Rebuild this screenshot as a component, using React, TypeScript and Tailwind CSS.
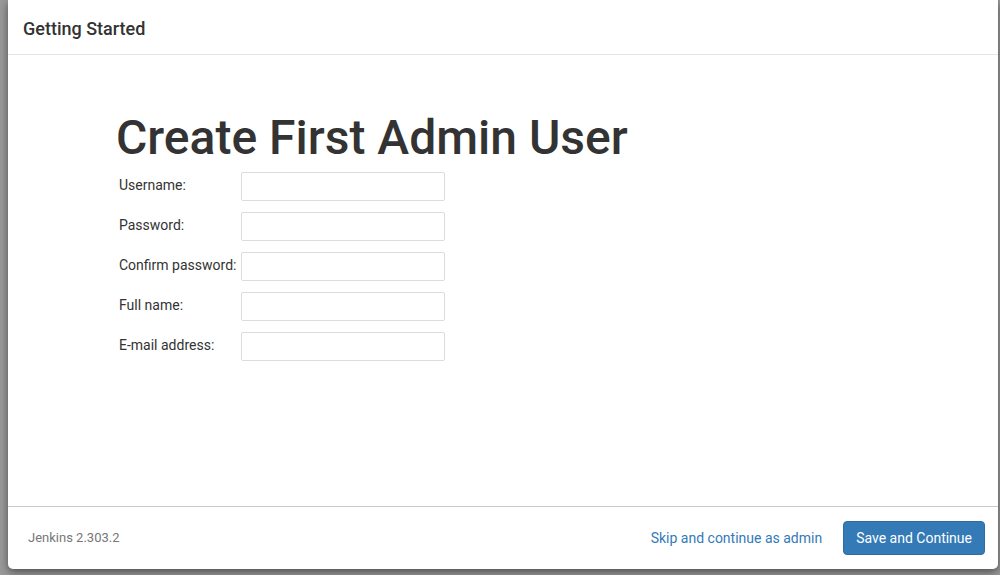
const FIELDS = ["Username:", "Password:", "Confirm password:", "Full name:", "E-mail address:"];

export default function App() {
  return (
    <div className="w-[1000px] h-[575px] bg-[#9a9a9a] overflow-hidden font-['Roboto',sans-serif]">
      <div className="ml-[8px] w-[990px] h-[569px] bg-white rounded-b-[5px] shadow-[0_3px_9px_rgba(0,0,0,0.5)] flex flex-col">
        {/* Header */}
        <div className="h-[55px] shrink-0 flex items-center pl-[15px] pt-[3px] border-b border-[#e5e5e5]">
          <h4 className="text-[18px] font-medium text-[#333] leading-none">Getting Started</h4>
        </div>

        {/* Body */}
        <div className="flex-1 pl-[108px] pt-[57px]">
          <h1 className="text-[48px] leading-[1.1] font-medium text-[#333] mb-[7px]">Create First Admin User</h1>
          <div className="flex flex-col gap-[11px] pl-[3px]">
            {FIELDS.map((label) => (
              <div key={label} className="flex items-center">
                <label className="w-[122px] text-[14px] text-[#333] -mt-[2px]">{label}</label>
                <input
                  className="w-[204px] h-[29px] border border-[#dcdcdc] rounded-[2px] bg-white outline-none"
                  type={label.includes("assword") ? "password" : "text"}
                />
              </div>
            ))}
          </div>
        </div>

        {/* Footer */}
        <div className="h-[63px] shrink-0 border-t border-[#c8c8c8] flex items-center justify-between pl-[20px] pr-[13px]">
          <span className="text-[13px] text-[#777]">Jenkins 2.303.2</span>
          <div className="flex items-center gap-[21px]">
            <a className="text-[14px] text-[#337ab7] cursor-pointer">Skip and continue as admin</a>
            <button className="h-[34px] px-[12px] rounded-[4px] bg-[#337ab7] border border-[#2e6da4] text-white text-[14px]">
              Save and Continue
            </button>
          </div>
        </div>
      </div>
    </div>
  );
}
